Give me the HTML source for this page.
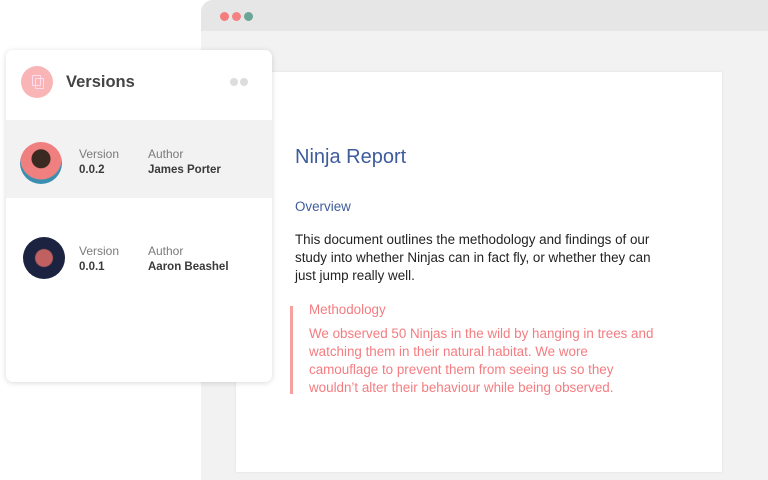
<!DOCTYPE html>
<html><head><style>
*{margin:0;padding:0;box-sizing:border-box}
body{width:768px;height:468px;overflow:hidden;background:#fff;position:relative;font-family:"Liberation Sans",sans-serif}
.win{position:absolute;left:201px;top:0;width:580px;height:480px;background:#f2f2f2;border-radius:12px 12px 0 0;overflow:hidden}
.bar{height:31px;background:#e6e6e6}
.dot{position:absolute;top:12px;width:9px;height:9px;border-radius:50%}
.doc{position:absolute;left:236px;top:72px;width:486px;height:400px;background:#fff;box-shadow:0 0 3px rgba(0,0,0,.08)}
.t{position:absolute;white-space:nowrap}
.card{position:absolute;left:6px;top:50px;width:266px;height:332px;background:#fff;border-radius:7px;box-shadow:0 1px 6px rgba(0,0,0,.15);overflow:hidden}
.row1{position:absolute;left:0;top:70px;width:266px;height:78px;background:#f2f2f2}
.lab{font-size:12px;color:#7a7a7a}
.val{font-size:11.5px;color:#3a3a3a;font-weight:bold}
.p{font-size:13.4px;line-height:18px;color:#222}
.r{font-size:13.4px;line-height:18px;color:#f47c80}
</style></head><body>
<div class="win"><div class="bar"></div>
<div class="dot" style="left:19px;background:#f47c7c"></div>
<div class="dot" style="left:31px;background:#f48282"></div>
<div class="dot" style="left:43px;background:#6aa596"></div>
</div>
<div class="doc"></div>
<div class="t" style="left:295px;top:146px;font-size:20px;color:#3e5c9c">Ninja Report</div>
<div class="t" style="left:295px;top:199px;font-size:13.4px;color:#3e5c9c">Overview</div>
<div class="t p" style="left:295px;top:231px">This document outlines the methodology and findings of our<br>study into whether Ninjas can in fact fly, or whether they can<br>just jump really well.</div>
<div style="position:absolute;left:290px;top:306px;width:3px;height:88px;background:#f7a0a0"></div>
<div class="t r" style="left:309px;top:301px">Methodology</div>
<div class="t r" style="left:309px;top:325px">We observed 50 Ninjas in the wild by hanging in trees and<br>watching them in their natural habitat. We wore<br>camouflage to prevent them from seeing us so they<br>wouldn’t alter their behaviour while being observed.</div>
<div class="card">
<div style="position:absolute;left:15px;top:16px;width:32px;height:32px;border-radius:50%;background:#f9b5b5"></div>
<div style="position:absolute;left:26px;top:25px;width:9px;height:11px;border:1px solid #fde;border-radius:1px"></div>
<div style="position:absolute;left:29px;top:28px;width:9px;height:11px;border:1px solid #fde;border-radius:1px"></div>
<div class="t" style="left:60px;top:23px;font-size:16.5px;font-weight:bold;color:#444">Versions</div>
<div style="position:absolute;left:224px;top:28px;width:8px;height:8px;border-radius:50%;background:#ddd"></div>
<div style="position:absolute;left:234px;top:28px;width:8px;height:8px;border-radius:50%;background:#ddd"></div>
<div class="row1"></div>
<div style="position:absolute;left:14px;top:92px;width:42px;height:42px;border-radius:50%;background:radial-gradient(circle at 50% 40%,#3a2a22 0 28%,#f08080 30% 62%,#3a8fb0 64%)"></div>
<div class="t lab" style="left:73px;top:97px">Version</div>
<div class="t val" style="left:73px;top:114px">0.0.2</div>
<div class="t lab" style="left:142px;top:97px">Author</div>
<div class="t val" style="left:142px;top:114px">James Porter</div>
<div style="position:absolute;left:17px;top:187px;width:42px;height:42px;border-radius:50%;background:radial-gradient(circle at 50% 50%,#c06060 0 28%,#1c2340 32%)"></div>
<div class="t lab" style="left:73px;top:194px">Version</div>
<div class="t val" style="left:73px;top:211px">0.0.1</div>
<div class="t lab" style="left:142px;top:194px">Author</div>
<div class="t val" style="left:142px;top:211px">Aaron Beashel</div>
</div>
</body></html>
